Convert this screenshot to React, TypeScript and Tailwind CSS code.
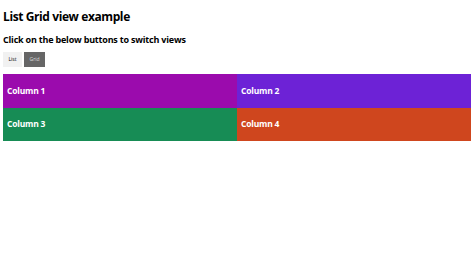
import React, { useState } from "react";

export default function App() {
  const [view, setView] = useState<"list" | "grid">("grid");
  const cols = [
    { label: "Column 1", bg: "bg-[#9b0bad]" },
    { label: "Column 2", bg: "bg-[#6d22d6]" },
    { label: "Column 3", bg: "bg-[#178c55]" },
    { label: "Column 4", bg: "bg-[#cf461e]" },
  ];
  return (
    <div className="w-[474px] h-[266px] bg-white px-[3px] pt-[8px] text-black" style={{ fontFamily: '"Open Sans", "Noto Sans", sans-serif' }}>
      <h2 className="text-[12px] font-bold leading-[18px] tracking-[-0.4px]">List Grid view example</h2>
      <p className="mt-[7px] text-[9px] font-bold leading-[14px] tracking-[-0.2px]">Click on the below buttons to switch views</p>
      <div className="mt-[5px] flex gap-[2px]">
        <button
          onClick={() => setView("list")}
          className={`h-[15px] w-[19px] text-[5px] leading-[15px] ${view === "list" ? "bg-[#666666] text-[#dddddd]" : "bg-[#f1f1f1] text-black"}`}
        >
          List
        </button>
        <button
          onClick={() => setView("grid")}
          className={`h-[15px] w-[21px] text-[5px] leading-[15px] ${view === "grid" ? "bg-[#666666] text-[#dddddd]" : "bg-[#f1f1f1] text-black"}`}
        >
          Grid
        </button>
      </div>
      <div className={`mt-[7px] grid ${view === "grid" ? "grid-cols-2" : "grid-cols-1"}`}>
        {cols.map((c, i) => (
          <div key={c.label} className={`${c.bg} ${i < 2 ? "h-[34px]" : "h-[33px]"} flex items-center px-[4px] text-white text-[8.5px] font-bold tracking-[-0.2px]`}>
            {c.label}
          </div>
        ))}
      </div>
    </div>
  );
}
